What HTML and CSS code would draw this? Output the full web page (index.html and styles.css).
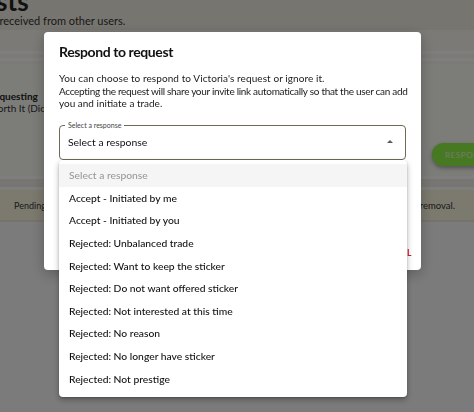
FILE: index.html
```html
<!DOCTYPE html>
<html>
<head>
<meta charset="utf-8">
<link rel="stylesheet" href="styles.css">
</head>
<body>
<div class="page">
  <header class="page-head">
    <h1 class="page-title">Requests</h1>
    <p class="page-sub">Here are the trade requests you received from other users.</p>
  </header>
  <div class="tabs"><span class="tab-line"></span><span class="tab-line"></span></div>
  <section class="card">
    <div class="card-info">
      <div class="card-name">Requesting</div>
      <div class="card-sticker">Worth It (Dice Roll)</div>
    </div>
    <button class="respond-btn">RESPOND</button>
  </section>
  <div class="divider"></div>
  <div class="pending">
    <span class="pending-label">Pending</span>
    <span class="pending-note">Requests are queued for removal.</span>
  </div>
</div>

<div class="overlay">
  <div class="dialog">
    <h2 class="dialog-title">Respond to request</h2>
    <p class="dialog-text"><span class="line-1">You can choose to respond to Victoria's request or ignore it.</span><br><span class="line-2">Accepting the request will share your invite link automatically so that the user can add</span><br><span class="line-3">you and initiate a trade.</span></p>
    <div class="field">
      <span class="field-label">Select a response</span>
      <span class="field-value">Select a response</span>
      <svg class="caret" width="6" height="3" viewBox="0 0 6 3"><path d="M0 3 L3 0 L6 3 Z" fill="#5a5a5a"/></svg>
    </div>
    <div class="dialog-actions">
      <button class="btn-cancel">CANCEL</button>
    </div>
  </div>
  <ul class="menu">
    <li class="menu-item placeholder">Select a response</li>
    <li class="menu-item">Accept - Initiated by me</li>
    <li class="menu-item">Accept - Initiated by you</li>
    <li class="menu-item">Rejected: Unbalanced trade</li>
    <li class="menu-item">Rejected: Want to keep the sticker</li>
    <li class="menu-item">Rejected: Do not want offered sticker</li>
    <li class="menu-item">Rejected: Not interested at this time</li>
    <li class="menu-item">Rejected: No reason</li>
    <li class="menu-item">Rejected: No longer have sticker</li>
    <li class="menu-item">Rejected: Not prestige</li>
  </ul>
</div>
</body>
</html>
```

FILE: styles.css
```css
* { box-sizing: border-box; }
html, body { margin: 0; padding: 0; }
body {
  width: 474px;
  height: 412px;
  overflow: hidden;
  background: #f6f6f6;
  font-family: "Lato", "Open Sans", sans-serif;
  color: #222;
}
.page {
  margin-left: -178px;
  width: 900px;
}
.page-head {
  background: #efebe1;
  margin-top: -12px;
  height: 42px;
}
.page-title {
  margin: 0;
  font-size: 26px;
  line-height: 26px;
  font-weight: 700;
  padding-left: 101px;
  color: #222;
}
.page-sub {
  margin: 0;
  font-size: 11px;
  line-height: 14px;
  padding-left: 22px;
  color: #333;
}
.tabs {
  background: #f7f5ef;
  height: 34px;
  display: flex;
  flex-direction: column;
  justify-content: flex-end;
  gap: 4px;
  padding-bottom: 3px;
}
.tab-line { display: block; height: 3px; background: #fdfcfa; }
.card {
  background: #f9f8f3;
  height: 112px;
  display: flex;
  align-items: flex-start;
  padding-left: 166px;
}
.card-info { margin-top: 27px; }
.card-name { font-size: 10px; font-weight: 700; line-height: 11px; color: #222; }
.card-sticker { font-size: 10px; line-height: 12px; color: #333; }
.respond-btn {
  margin-left: auto;
  margin-right: 160px;
  margin-top: 79px;
  width: 130px;
  height: 23px;
  border: none;
  border-radius: 12px;
  background: #8ef244;
  box-shadow: 0 2px 4px rgba(0,0,0,0.35);
  color: #e6f3dc;
  font-family: inherit;
  font-size: 8px;
  letter-spacing: 0.6px;
  text-align: left;
  padding-left: 13px;
}
.divider { height: 14px; background: #efede6; border-top: 3px solid #fdfcfa; border-bottom: 3px solid #fdfcfa; }
.pending {
  background: #f8f4de;
  height: 32px;
  display: flex;
  align-items: center;
  justify-content: space-between;
  font-size: 9px;
  color: #333;
  padding-left: 192px;
  padding-right: 267px;
  border-bottom: 2px solid #ebe7d8;
}
.pending-note { color: #333; font-size: 9.5px; }

.overlay {
  position: fixed;
  inset: 0;
  background: rgba(0, 0, 0, 0.5);
}
.dialog {
  position: absolute;
  left: 44px;
  top: 32px;
  width: 377px;
  height: 238px;
  background: #fff;
  border-radius: 4px;
  padding: 11px 9px 0 15px;
  box-shadow: 0 4px 14px rgba(0,0,0,0.25);
}
.dialog-title {
  margin: 0;
  font-size: 14px;
  line-height: 18px;
  font-weight: 700;
  letter-spacing: -0.4px;
  color: #111;
}
.dialog-text {
  margin: 11px 0 0 0;
  font-size: 10px;
  line-height: 12.5px;
  color: #1a1a1a;
  white-space: nowrap;
}
.line-1 { letter-spacing: 0.08px; }
.line-2 { letter-spacing: -0.3px; }
.field {
  position: relative;
  margin-top: 15px;
  margin-right: 6px;
  height: 35px;
  border: 1px solid #6f6a55;
  border-radius: 4px;
  display: flex;
  align-items: center;
  padding: 0 8px;
}
.field-label {
  position: absolute;
  top: -6px;
  left: 5px;
  background: #fff;
  padding: 0 3px;
  font-size: 7px;
  line-height: 10px;
  color: #444;
}
.field-value { font-size: 10.4px; color: #111; flex: 1; }
.caret { margin-right: 4px; margin-top: -2px; }
.dialog-actions {
  display: flex;
  justify-content: flex-end;
  margin-top: 88px;
}
.btn-cancel {
  border: none;
  background: none;
  color: #e0162b;
  font-family: inherit;
  font-weight: 700;
  font-size: 8.5px;
  line-height: 10px;
  letter-spacing: 0.5px;
  padding: 0;
}
.menu {
  position: absolute;
  left: 59px;
  top: 160px;
  width: 348px;
  height: 237px;
  margin: 0;
  padding: 4px 0;
  list-style: none;
  background: #fff;
  border-radius: 4px;
  box-shadow: 0 3px 6px rgba(0,0,0,0.28), 0 1px 2px rgba(0,0,0,0.2);
}
.menu-item {
  height: 22.6px;
  display: flex;
  align-items: center;
  padding-left: 10px;
  font-size: 10.3px;
  font-weight: 500;
  color: #111;
}
.menu-item.placeholder { background: #f5f5f5; color: #9a9a9a; }
```
